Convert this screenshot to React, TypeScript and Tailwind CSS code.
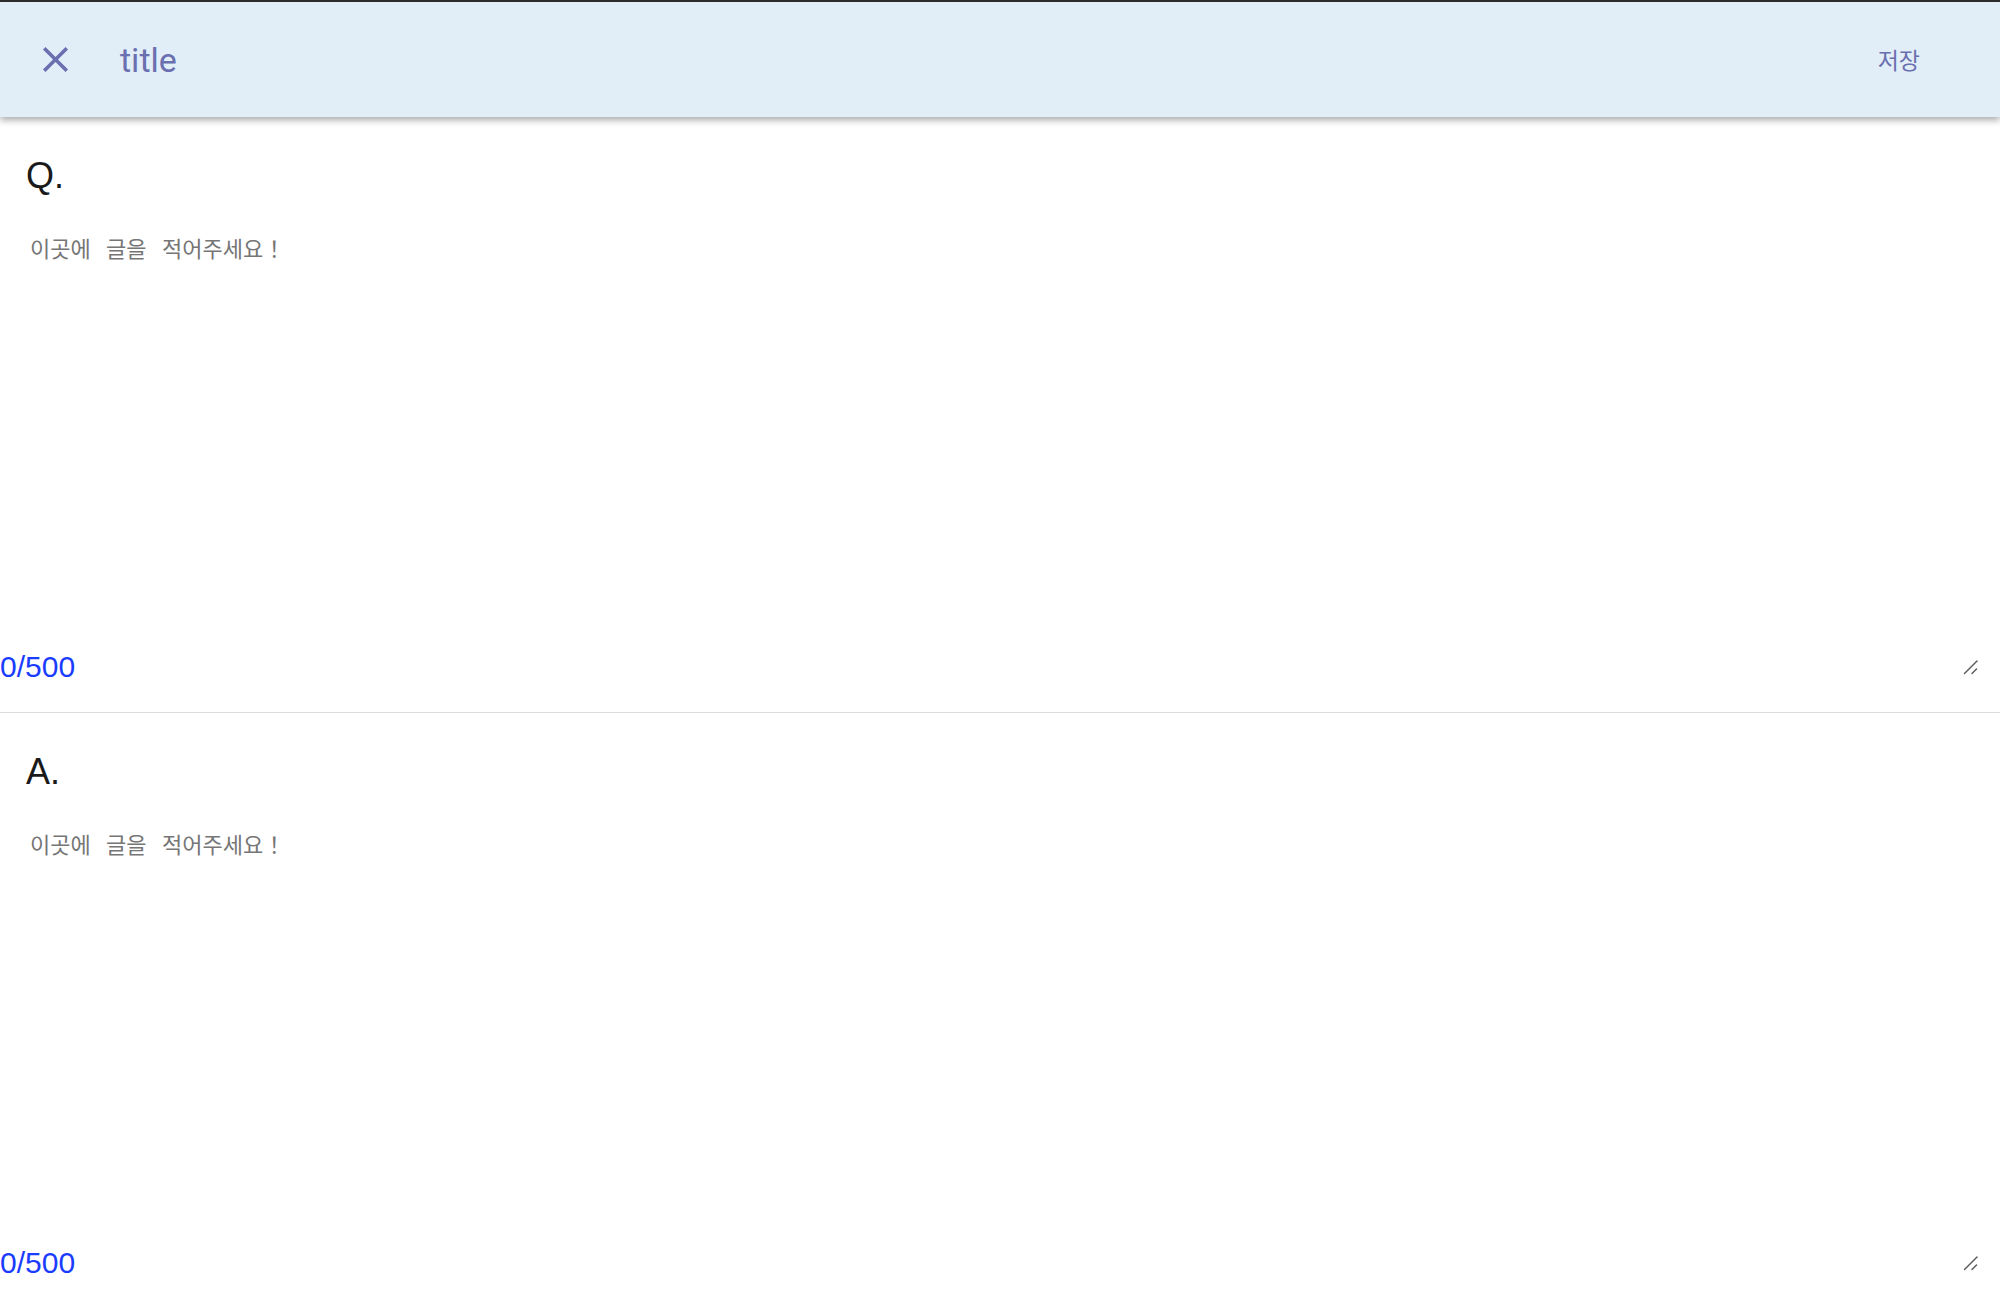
import React, { useState } from "react";

function CloseIcon() {
  return (
    <svg width="43" height="43" viewBox="0 0 24 24" fill="#6a6fb0" aria-hidden="true">
      <path d="M19 6.41L17.59 5 12 10.59 6.41 5 5 6.41 10.59 12 5 17.59 6.41 19 12 13.41 17.59 19 19 17.59 13.41 12z" />
    </svg>
  );
}

function Grip() {
  return (
    <svg width="16" height="16" viewBox="0 0 16 16" aria-hidden="true">
      <line x1="1.5" y1="14.5" x2="14" y2="2" stroke="#5a5a5a" strokeWidth="1.4" strokeLinecap="round" />
      <line x1="9" y1="14.5" x2="13.5" y2="10" stroke="#5a5a5a" strokeWidth="1.4" strokeLinecap="round" />
    </svg>
  );
}

function Section({ label, first }: { label: string; first?: boolean }) {
  const [text, setText] = useState("");
  return (
    <section
      className={
        first
          ? "pt-[41px] pb-[30px] border-b border-[#dcdcdc]"
          : "pt-[41px] pb-[31px]"
      }
    >
      <div className="pl-[26px] text-[36px] leading-[36px] text-[#1a1a1a] font-['Liberation_Sans',Arial,sans-serif]">
        {label}
      </div>
      <textarea
        value={text}
        maxLength={500}
        onChange={(e) => setText(e.target.value)}
        placeholder={"이곳에\u2002\u2009글을\u2002\u2009적어주세요！"}
        className="block mt-[38px] ml-[30px] w-[calc(100%-60px)] h-[420px] resize-none bg-transparent outline-none text-[22px] leading-[30px] text-[#333] placeholder:text-[#767676] font-['Noto_Sans_CJK_KR','Noto_Sans',sans-serif]"
      />
      <div className="flex items-center justify-between h-[30px] pr-[21px]">
        <span className="text-[30px] leading-[30px] text-[#1a3cff] font-['Liberation_Sans',Arial,sans-serif]">
          {text.length}/500
        </span>
        <Grip />
      </div>
    </section>
  );
}

export default function App() {
  return (
    <div className="min-h-screen bg-white overflow-hidden">
      <header className="relative z-10 h-[117px] border-t-2 border-[#2b2b2b] bg-[#e1eef7] shadow-[0_3px_7px_rgba(0,0,0,0.35)] flex items-center">
        <button className="ml-[34px] w-[43px] h-[43px] flex items-center justify-center">
          <CloseIcon />
        </button>
        <div className="ml-[43px] flex-1 text-[34px] leading-[40px] text-[#6a6fb0] font-['Roboto','Liberation_Sans',sans-serif]">
          title
        </div>
        <button className="mr-[80px] mb-[2px] text-[23px] leading-[30px] text-[#6a6fb0] font-['Noto_Sans_CJK_KR','Noto_Sans',sans-serif]">
          저장
        </button>
      </header>
      <Section label="Q." first />
      <Section label="A." />
    </div>
  );
}
